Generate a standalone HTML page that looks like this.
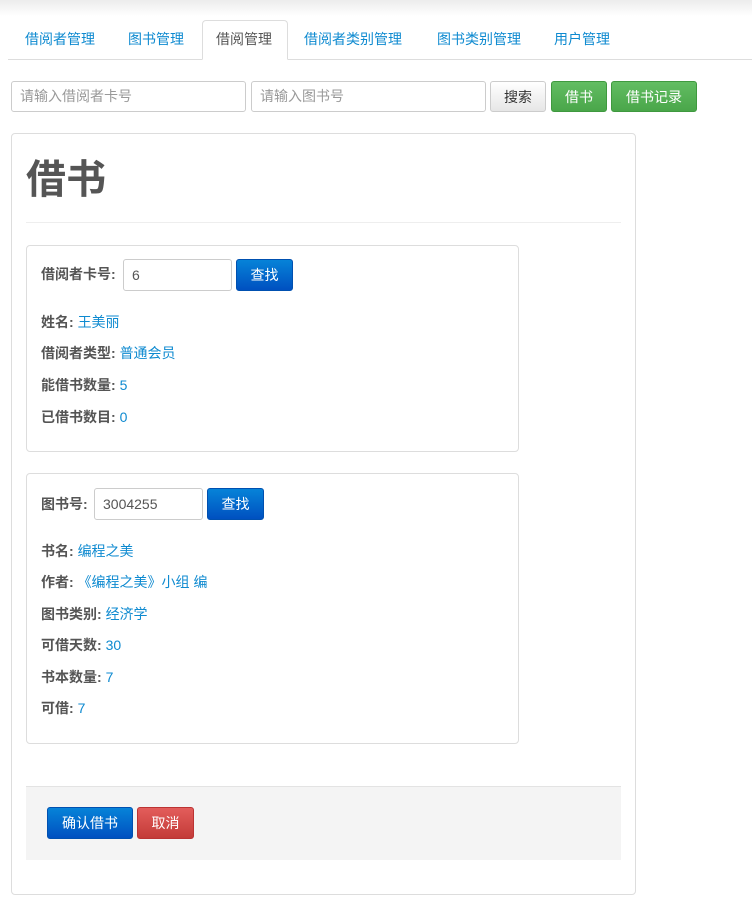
<!DOCTYPE html>
<html><head><meta charset="utf-8"><style>
*{box-sizing:border-box;margin:0;padding:0}
body{width:752px;height:901px;background:#fff;font-family:"Liberation Sans","Noto Sans CJK SC",sans-serif;font-size:14px;color:#555;position:relative;overflow:hidden}
.a{position:absolute}
.shadow{left:0;top:0;width:752px;height:16px;background:linear-gradient(#ececec,#fff)}
.tab{top:20px;height:39px;line-height:38px;color:#0e8ad0;font-size:14px}
.inp{border:1px solid #ccc;border-radius:3px;background:#fff;color:#999;padding-left:8px;font-size:14px;line-height:29px}
.btn{border-radius:3px;color:#fff;text-align:center;font-size:14px;line-height:30px}
.green{background:linear-gradient(#62bd62,#4aa64a);border:1px solid #3f993f}
.blue{background:linear-gradient(#0683d8,#0050c0);border:1px solid #0050b0}
.red{background:linear-gradient(#e35d5b,#c33b38);border:1px solid #b33}
.box{border:1px solid #ddd;border-radius:4px;background:#fff}
.row{left:41px;font-size:14px}
.row b{color:#555}
.row span{color:#0e8ad0}
</style></head><body>
<div class="a shadow"></div>
<div class="a" style="left:8px;top:59px;width:744px;height:1px;background:#ddd"></div>
<div class="a" style="left:202px;top:20px;width:86px;height:40px;border:1px solid #ddd;border-bottom:1px solid #fff;border-radius:4px 4px 0 0;background:#fff"></div>
<div class="a tab" style="left:25px">借阅者管理</div>
<div class="a tab" style="left:128px">图书管理</div>
<div class="a tab" style="left:216px;color:#555">借阅管理</div>
<div class="a tab" style="left:304px">借阅者类别管理</div>
<div class="a tab" style="left:437px">图书类别管理</div>
<div class="a tab" style="left:554px">用户管理</div>

<div class="a inp" style="left:11px;top:81px;width:235px;height:31px">请输入借阅者卡号</div>
<div class="a inp" style="left:251px;top:81px;width:235px;height:31px">请输入图书号</div>
<div class="a btn" style="left:490px;top:81px;width:56px;height:31px;background:linear-gradient(#fff,#e6e6e6);border:1px solid #ccc;color:#333">搜索</div>
<div class="a btn green" style="left:551px;top:81px;width:56px;height:31px">借书</div>
<div class="a btn green" style="left:611px;top:81px;width:86px;height:31px">借书记录</div>

<div class="a box" style="left:11px;top:133px;width:625px;height:762px"></div>
<div class="a" style="left:26px;top:154px;font-size:40px;font-weight:bold;color:#555;line-height:52px">借书</div>
<div class="a" style="left:26px;top:222px;width:595px;height:1px;background:#eee"></div>

<div class="a box" style="left:26px;top:245px;width:493px;height:207px"></div>
<div class="a row" style="top:264px"><b>借阅者卡号:</b></div>
<div class="a inp" style="left:123px;top:259px;width:109px;height:32px;color:#555;line-height:30px">6</div>
<div class="a btn blue" style="left:236px;top:259px;width:57px;height:32px">查找</div>
<div class="a row" style="top:312px"><b>姓名:</b> <span>王美丽</span></div>
<div class="a row" style="top:343px"><b>借阅者类型:</b> <span>普通会员</span></div>
<div class="a row" style="top:375px"><b>能借书数量:</b> <span>5</span></div>
<div class="a row" style="top:407px"><b>已借书数目:</b> <span>0</span></div>

<div class="a box" style="left:26px;top:473px;width:493px;height:271px"></div>
<div class="a row" style="top:494px"><b>图书号:</b></div>
<div class="a inp" style="left:94px;top:488px;width:109px;height:32px;color:#555;line-height:30px">3004255</div>
<div class="a btn blue" style="left:207px;top:488px;width:57px;height:32px">查找</div>
<div class="a row" style="top:541px"><b>书名:</b> <span>编程之美</span></div>
<div class="a row" style="top:572px"><b>作者:</b> <span>《编程之美》小组 编</span></div>
<div class="a row" style="top:604px"><b>图书类别:</b> <span>经济学</span></div>
<div class="a row" style="top:635px"><b>可借天数:</b> <span>30</span></div>
<div class="a row" style="top:667px"><b>书本数量:</b> <span>7</span></div>
<div class="a row" style="top:698px"><b>可借:</b> <span>7</span></div>

<div class="a" style="left:26px;top:786px;width:595px;height:74px;background:#f4f4f4;border-top:1px solid #e3e3e3"></div>
<div class="a btn blue" style="left:47px;top:807px;width:86px;height:32px">确认借书</div>
<div class="a btn red" style="left:137px;top:807px;width:57px;height:32px">取消</div>
</body></html>
